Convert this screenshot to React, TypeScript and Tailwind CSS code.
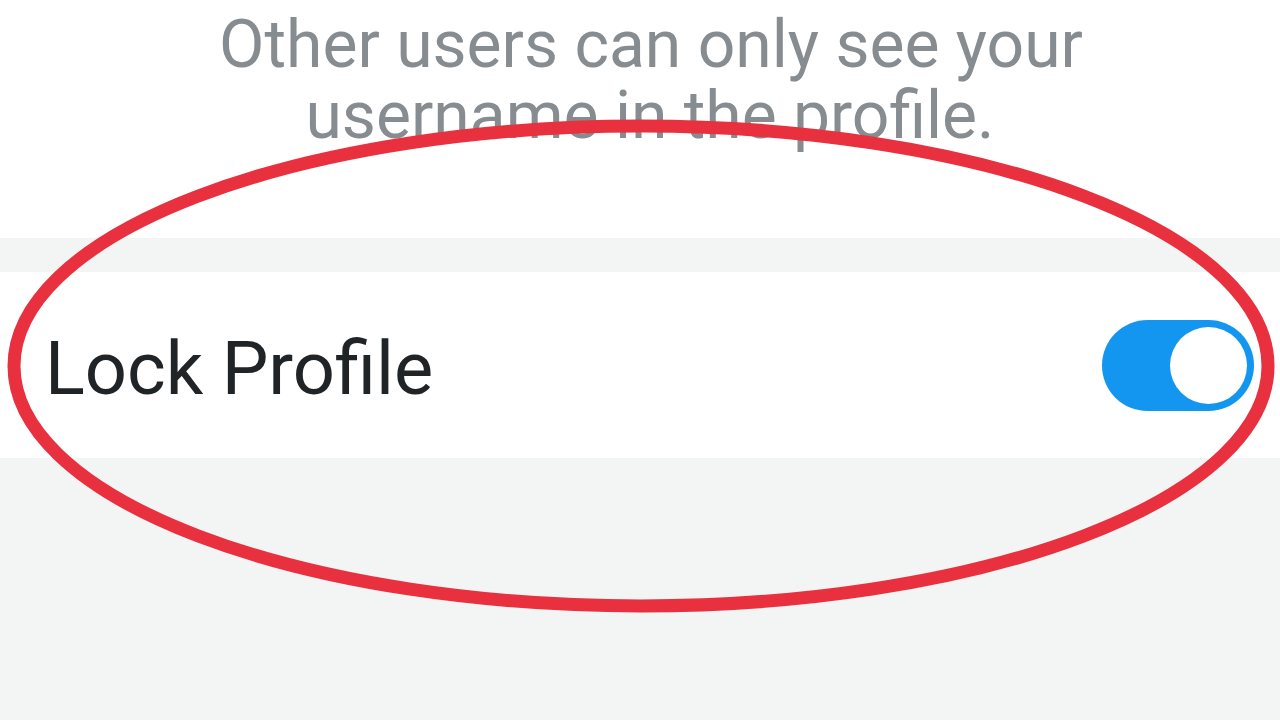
export default function App() {
  return (
    <div
      className="relative w-[1280px] h-[720px] overflow-hidden bg-[#f3f4f4]"
      style={{ fontFamily: 'Roboto, "Noto Sans", sans-serif' }}
    >
      {/* description text */}
      <div className="h-[238px] overflow-hidden bg-white">
        <div className="-mt-[76px] text-center text-[66px] leading-[71px] text-[#878c90]">
          <div className="mb-[14px] pl-[10px]">Only your friends can see it</div>
          <div className="pl-[22px]">Other users can only see your</div>
          <div className="pl-[20px]">username in the profile.</div>
        </div>
      </div>

      {/* divider */}
      <div className="h-[34px] bg-[#f3f4f4]" />

      {/* lock profile row */}
      <div className="flex h-[186px] items-center justify-between bg-white pl-[45px] pr-[26px]">
        <span className="mt-[7px] text-[74px] leading-none text-[#202427]">Lock Profile</span>
        <div className="flex h-[91px] w-[152px] items-center justify-end rounded-full bg-[#1296f0] pr-[7px]">
          <div className="h-[77px] w-[77px] rounded-full bg-white" />
        </div>
      </div>

      {/* highlight */}
      <svg className="pointer-events-none absolute inset-0" width="1280" height="720" viewBox="0 0 1280 720">
        <ellipse cx="641" cy="366" rx="627" ry="240" fill="none" stroke="#e8303f" strokeWidth="13" />
      </svg>
    </div>
  );
}
